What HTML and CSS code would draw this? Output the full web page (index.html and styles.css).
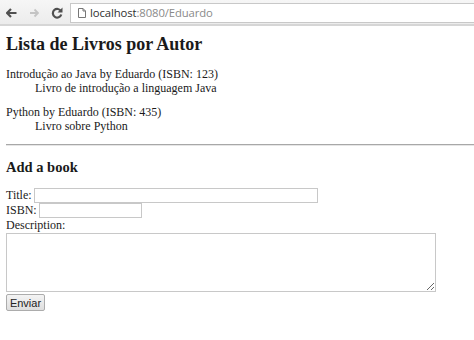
FILE: index.html
```html
<!DOCTYPE html>
<html>
<head>
<meta charset="utf-8">
<link rel="stylesheet" href="styles.css">
</head>
<body>
<div class="toolbar">
  <div class="nav">
    <svg class="ico back" width="11" height="10" viewBox="0 0 11 10"><path d="M5 1 L1 5 L5 9 M1 5 H10.5" fill="none" stroke="#505050" stroke-width="2.2"/></svg>
    <svg class="ico fwd" width="10" height="10" viewBox="0 0 10 10"><path d="M5.5 1.5 L9 5 L5.5 8.5 M9 5 H1" fill="none" stroke="#c4c4c4" stroke-width="1.8"/></svg>
    <svg class="ico reload" width="12" height="12" viewBox="0 0 12 12"><path d="M10 4.2 A4.3 4.3 0 1 0 10.3 7.5" fill="none" stroke="#505050" stroke-width="2.2"/><path d="M11.5 0.5 V5.5 H6.5 Z" fill="#505050"/></svg>
  </div>
  <div class="omnibox">
    <svg class="page" width="8" height="10" viewBox="0 0 8 10"><path d="M0.5 0.5 H5 L7.5 3 V9.5 H0.5 Z M5 0.5 V3 H7.5" fill="#fff" stroke="#777" stroke-width="1"/></svg>
    <span class="host">localhost</span><span class="path">:8080/Eduardo</span>
  </div>
</div>
<div class="content">
  <h2 class="title">Lista de Livros por Autor</h2>
  <dl class="book">
    <dt>Introdução ao Java by Eduardo (ISBN: 123)</dt>
    <dd>Livro de introdução a linguagem Java</dd>
  </dl>
  <dl class="book">
    <dt>Python by Eduardo (ISBN: 435)</dt>
    <dd>Livro sobre Python</dd>
  </dl>
  <hr class="sep">
  <h3 class="sub">Add a book</h3>
  <form class="form">
    <div class="row"><label>Title:</label><input class="in-title" type="text"></div>
    <div class="row"><label>ISBN:</label><input class="in-isbn" type="text"></div>
    <div class="row"><label>Description:</label></div>
    <textarea class="desc"></textarea>
    <div class="btnrow"><button type="button" class="btn">Enviar</button></div>
  </form>
</div>
</body>
</html>
```
FILE: styles.css
```css
html, body { margin: 0; padding: 0; background: #fff; }
body { font-family: "Liberation Serif", serif; color: #1a1a1a; }

.toolbar {
  height: 23px;
  display: flex;
  align-items: center;
  background: linear-gradient(#f6f6f6, #ececec);
  border-bottom: 2px solid #d6d6d6;
  padding-top: 1px;
}
.nav { display: flex; align-items: center; width: 70px; padding-left: 6px; box-sizing: border-box; }
.ico { display: block; }
.back { margin-right: 12px; }
.fwd { margin-right: 12px; }
.omnibox {
  flex: 1;
  height: 18px;
  background: #fff;
  border: 1px solid #c8c8c8;
  border-right: none;
  display: flex;
  align-items: center;
  padding-left: 7px;
  font-family: "Open Sans", sans-serif;
  font-size: 11.3px;
  letter-spacing: -0.1px;
}
.page { margin-right: 4px; }
.host { color: #303030; }
.path { color: #8a8a8a; }

.content { padding-left: 6px; }
.title { font-size: 18px; line-height: 22px; margin: 7px 0 13px; font-weight: bold; }
.book { font-size: 12px; line-height: 13.5px; margin: 0 0 11px; }
.book dt { margin: 0; }
.book dd { margin: 0 0 0 29px; }
.sep { border: none; border-top: 1px solid #a8a8a8; border-bottom: 1px solid #e6e6e6; margin: 0; }
.sub { font-size: 14.5px; line-height: 18px; margin: 12px 0 12px; font-weight: bold; }

.form { font-size: 12px; }
.row { display: flex; align-items: center; height: 15px; }
.row label { margin-right: 2px; }
.row input {
  height: 15px; box-sizing: border-box; border: 1px solid #c8c8c8; padding: 0; margin: 0;
}
.in-title { width: 284px; }
.in-isbn { width: 103px; }
.desc {
  display: block; width: 430px; height: 59px; box-sizing: border-box; margin: 0;
  border: 1px solid #c8c8c8; padding: 0; resize: both;
}
.btnrow { padding-top: 2px; }
.btn {
  width: 39px; height: 17px; padding: 0; margin: 0;
  font-family: "Liberation Sans", sans-serif; font-size: 11px; color: #222;
  border: 1px solid #acacac; border-radius: 2px;
  background: linear-gradient(#f4f4f4, #dedede);
}
```
